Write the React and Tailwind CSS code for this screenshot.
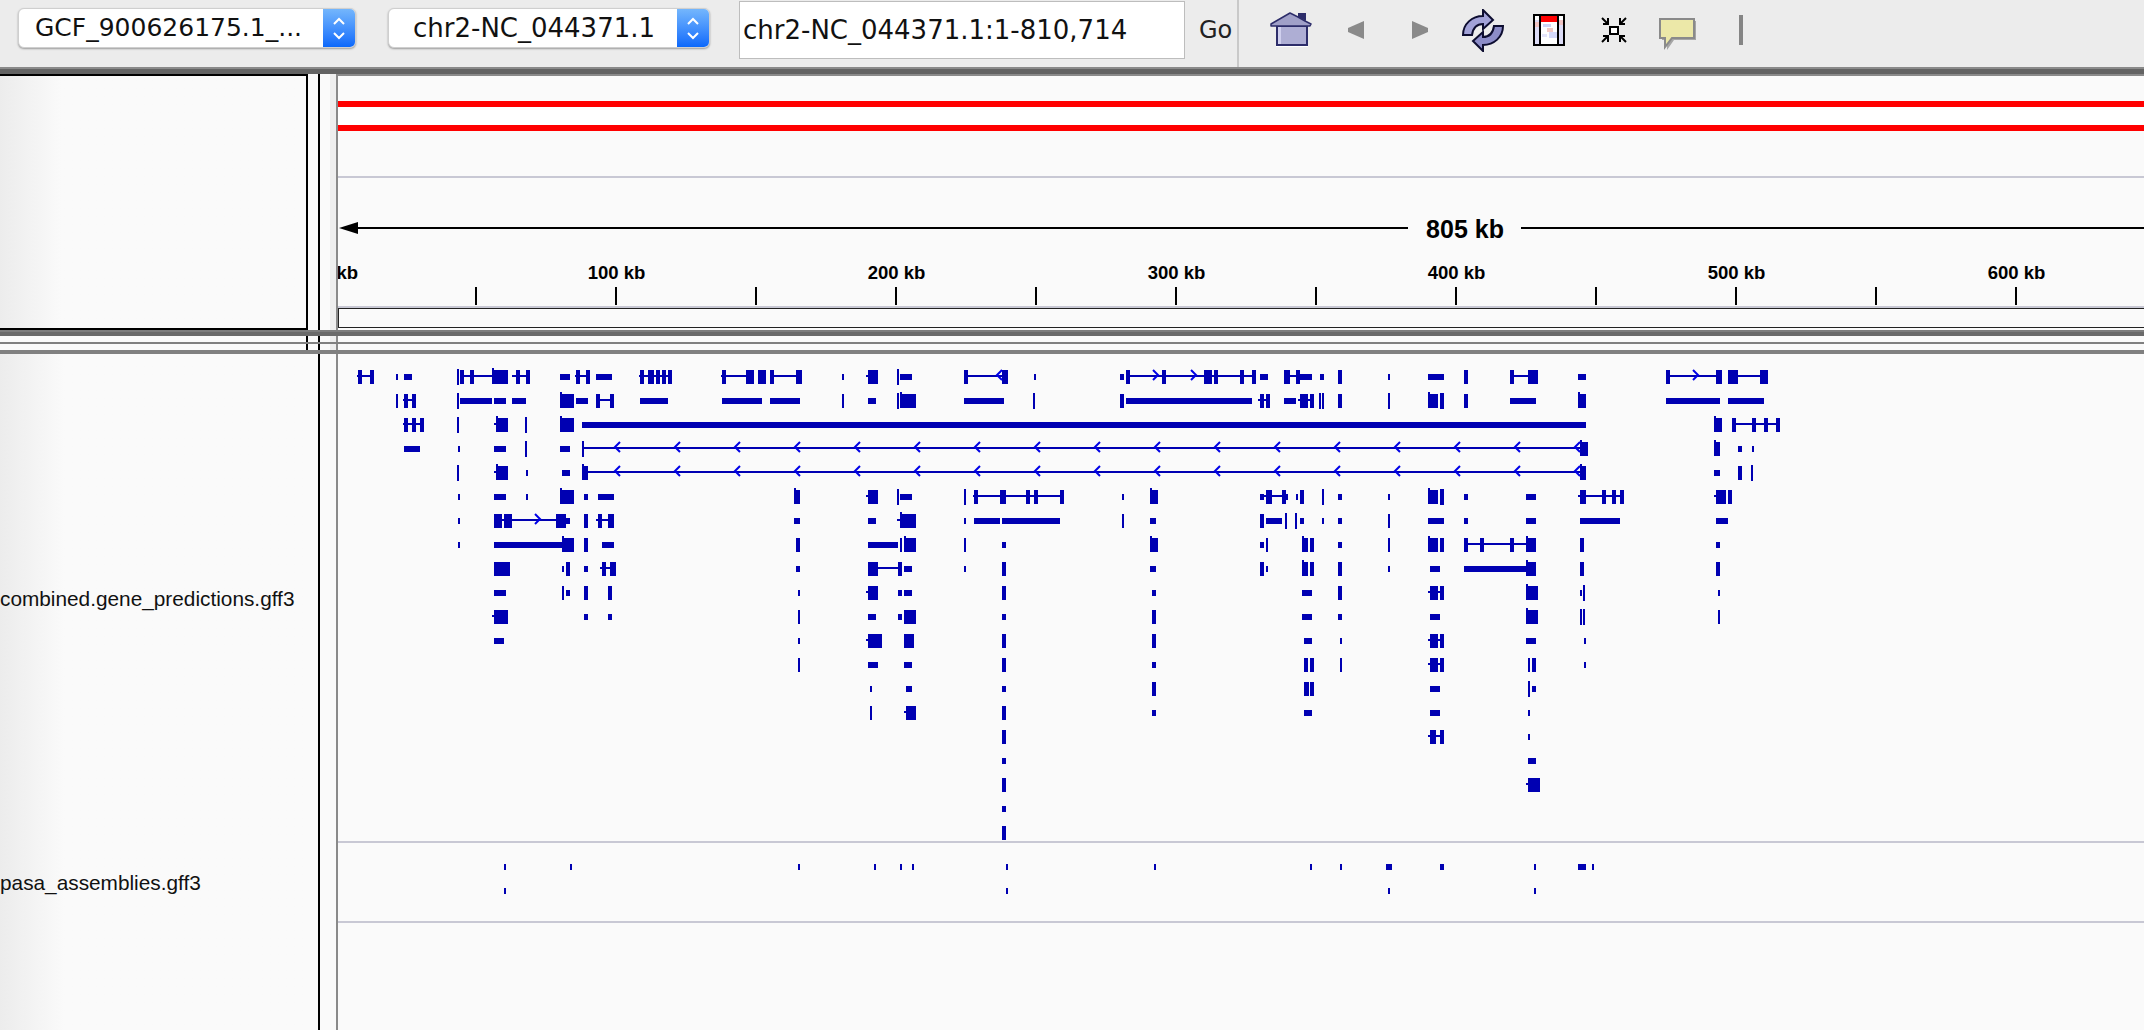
import React from 'react';

const UI_FONT = "font-['DejaVu_Sans',sans-serif]";

// gene rows of the first track: "x1-x2type", t tall exon, s short exon, l intron line, u taller bar, b tall with bump
const ROWS = [
  '358-362t 370-374t 357-374l 396-398s 404-412s 457-459u 460-464t 470-474t 460-492l 492-508b 512-530l 516-520t 526-530t 560-570s 576-580t 586-590t 575-590l 596-612s 639-672l 640-644t 648-654t 656-660t 662-666t 668-672t 721-746l 722-726t 746-754t 758-766t 770-796l 770-774t 796-802t 842-844s 866-868l 868-878t 897-899u 900-912s 964-1002l 964-968t 1002-1008t 1034-1036s 1120-1124s 1126-1254l 1126-1130t 1162-1166t 1204-1212t 1214-1218t 1240-1244t 1252-1256t 1260-1268s 1284-1300l 1284-1290t 1296-1300t 1300-1312s 1320-1324s 1338-1342t 1388-1390s 1428-1444s 1464-1468t 1510-1528l 1510-1514t 1528-1538t 1578-1586s 1666-1716l 1666-1670t 1716-1722t 1728-1760l 1728-1738t 1760-1768t',
  '396-398t 403-416l 404-408t 412-416t 457-459u 460-492s 494-506s 512-526s 560-574b 576-588s 596-614l 596-600t 610-614t 640-668s 722-762s 770-800s 842-844t 868-876s 897-899u 900-916b 964-1004s 1033-1035u 1120-1124t 1126-1252s 1258-1270l 1260-1264t 1266-1270t 1284-1296s 1298-1314l 1300-1308t 1310-1314t 1319-1321u 1322-1324u 1338-1342t 1388-1390u 1428-1438b 1440-1444u 1464-1468t 1510-1536s 1578-1586b 1666-1720s 1728-1764s',
  '403-424l 404-408t 412-416t 420-424t 457-459u 494-508l 496-508b 525-527u 560-574b 582-1586s 1714-1722b 1732-1780l 1732-1736t 1752-1756t 1764-1768t 1776-1780t',
  '404-420s 458-460s 494-506s 525-527u 560-570s 582-1580l 582-584u 1580-1588b 1714-1720b 1738-1742s 1752-1754s',
  '457-459u 494-508l 496-508b 526-528s 562-570s 582-1580l 582-588b 1580-1586b 1714-1720s 1738-1742t 1751-1753u',
  '458-460s 494-506s 526-528s 560-574b 584-588s 598-614s 794-800b 866-868l 868-878t 897-899u 900-912s 964-966u 973-1064l 974-978t 1000-1006t 1026-1030t 1034-1038t 1060-1064t 1122-1124s 1150-1158b 1260-1264s 1264-1288l 1266-1272t 1282-1286t 1286-1288s 1296-1298s 1300-1304t 1322-1324u 1338-1342s 1388-1390s 1428-1438b 1440-1444u 1464-1468s 1526-1536s 1578-1624l 1580-1586t 1602-1606t 1612-1616t 1620-1624t 1714-1726l 1716-1726t 1728-1732t',
  '458-460s 494-556l 494-502t 504-512t 556-566t 566-570s 584-588t 596-614l 598-602t 608-614t 794-800s 868-876s 897-902l 900-916b 964-966s 974-1000s 1002-1060s 1122-1124t 1150-1156s 1260-1264t 1266-1282s 1285-1287u 1295-1297u 1300-1304s 1322-1324s 1338-1342s 1388-1390t 1428-1444s 1464-1468s 1526-1536s 1580-1620s 1716-1728s',
  '458-460s 494-562s 562-574b 584-588t 602-614s 796-800t 868-898s 900-902t 904-916b 964-966t 1002-1006s 1150-1158b 1260-1264s 1266-1268t 1302-1308b 1310-1314t 1338-1342s 1388-1390t 1428-1438b 1440-1444t 1464-1526l 1464-1468t 1480-1484t 1510-1514t 1526-1536b 1580-1584t 1716-1720s',
  '494-510t 562-564s 566-570t 584-588s 600-616l 602-606t 610-616t 796-800s 868-898l 868-878t 898-902t 904-912s 964-966s 1002-1006t 1150-1156s 1260-1264t 1266-1268s 1302-1308b 1310-1314t 1338-1342t 1388-1390s 1430-1440s 1464-1526s 1526-1536b 1580-1584t 1716-1720t',
  '494-506s 562-564t 566-570s 584-588t 608-612t 798-800s 866-868l 868-878t 898-902s 904-912s 1002-1006t 1152-1156s 1302-1312s 1338-1342t 1428-1444l 1430-1438t 1440-1444t 1526-1538b 1580-1582s 1583-1585u 1718-1720s',
  '492-494l 494-508t 584-588s 608-612s 798-800t 868-876s 898-902s 904-916t 1002-1006s 1152-1156t 1302-1312s 1338-1342s 1430-1440s 1526-1538b 1580-1582u 1583-1585u 1718-1720t',
  '494-504s 798-800s 866-868l 868-882t 904-914t 1002-1006t 1152-1156t 1304-1312s 1340-1342s 1428-1444l 1430-1438t 1440-1444t 1526-1536s 1584-1586s',
  '798-800t 868-878s 904-912s 1002-1006t 1152-1156s 1304-1308t 1310-1314t 1340-1342t 1428-1444l 1430-1438t 1440-1444t 1528-1530t 1532-1536t 1584-1586s',
  '870-872s 906-912s 1002-1006s 1152-1156t 1304-1309t 1310-1314t 1430-1440s 1528-1530u 1532-1536s',
  '870-872t 904-906l 906-916t 1002-1006t 1152-1156s 1304-1312s 1430-1440s 1528-1530s',
  '1002-1006t 1428-1444l 1430-1436t 1440-1444t 1528-1530s',
  '1002-1006s 1528-1536s',
  '1002-1006t 1526-1528l 1528-1540t',
  '1002-1006s',
  '1002-1006t',
];

const PASA_ROWS = [
  '504-506s 570-572s 798-800s 874-876s 900-902s 912-914s 1006-1008s 1154-1156s 1310-1312s 1340-1342s 1386-1392s 1440-1444s 1534-1536s 1578-1586s 1592-1594s',
  '504-506s 1006-1008s 1388-1390s 1534-1536s',
];

const LEFT_CHEVRONS = Array.from({ length: 17 }, (_, i) => 615 + i * 60);

const GeneRows = ({ rows, firstY, viewY, height }) => (
  <svg className="block" width="1806" height={height} viewBox={`338 ${viewY} 1806 ${height}`} shapeRendering="crispEdges">
    {rows.map((row, i) => {
      const c = firstY + i * 24;
      return row.split(' ').map((seg) => {
        const [, a, b, type] = seg.match(/(\d+)-(\d+)(\w)/);
        const x = Number(a);
        const w = Number(b) - x;
        if (type === 'l') return <rect key={seg} x={x} y={c - 2} width={w} height={2} fill="#0000b2" />;
        if (type === 's') return <rect key={seg} x={x} y={c - 3} width={w} height={6} fill="#0000b2" />;
        if (type === 'u') return <rect key={seg} x={x} y={c - 8} width={w} height={16} fill="#0000b2" />;
        return (
          <g key={seg} fill="#0000b2">
            <rect x={x} y={c - 7} width={w} height={14} />
            {type === 'b' && <rect x={x} y={c - 9} width={2} height={2} />}
          </g>
        );
      });
    })}
  </svg>
);

const Chevron = ({ x, c, dir }) => (
  <polyline
    points={`${x + 5 * dir},${c - 7} ${x},${c - 2} ${x + 5 * dir},${c + 3}`}
    fill="none"
    stroke="#0000e6"
    strokeWidth="2"
  />
);

const GeneTrack = () => (
  <div className="relative h-[489px] border-b-2 border-[#c8c8d4]">
    <GeneRows rows={ROWS} firstY={377} viewY={354} height={487} />
    <svg className="absolute left-0 top-0" width="1806" height="487" viewBox="338 354 1806 487">
      {LEFT_CHEVRONS.map((x) => (
        <g key={x}>
          <Chevron x={x} c={449} dir={1} />
          <Chevron x={x} c={473} dir={1} />
        </g>
      ))}
      <Chevron x={997} c={377} dir={1} />
      <Chevron x={1158} c={377} dir={-1} />
      <Chevron x={1196} c={377} dir={-1} />
      <Chevron x={1698} c={377} dir={-1} />
      <Chevron x={540} c={521} dir={-1} />
    </svg>
  </div>
);

const Ruler = () => {
  const ticks = Array.from({ length: 13 }, (_, i) => 475.5 + i * 140);
  return (
    <svg className="block font-['Liberation_Sans',sans-serif] font-bold" width="1806" height="128" viewBox="338 178 1806 128">
      <rect x="345" y="227" width="1063" height="2" fill="#000" />
      <rect x="1521" y="227" width="623" height="2" fill="#000" />
      <polygon points="339,228 358,222 358,234" fill="#000" />
      <text x="1465" y="238" textAnchor="middle" fontSize="25" fill="#000">805 kb</text>
      <text x="358" y="279" textAnchor="end" fontSize="18.5" fill="#000">0 kb</text>
      {ticks.map((x, i) => (
        <g key={x}>
          <rect x={Math.floor(x)} y="287" width="2" height="18" fill="#000" />
          {i % 2 === 1 && (
            <text x={x + 1} y="279" textAnchor="middle" fontSize="18.5" fill="#000">
              {((i + 1) / 2) * 100} kb
            </text>
          )}
        </g>
      ))}
    </svg>
  );
};

const Combo = ({ label, width, textClass }) => (
  <div className={`mb-1 flex h-10 ${width} overflow-hidden rounded-md border border-[#cfcfcf] bg-white shadow-[0_1px_2px_rgba(0,0,0,0.35)]`}>
    <div className={`flex-1 overflow-hidden whitespace-nowrap leading-[38px] text-[#111] ${textClass}`}>{label}</div>
    <div className="flex w-8 flex-col items-center justify-center gap-[5px] bg-linear-to-b from-[#74b6fc] to-[#0a68fb]">
      <svg width="14" height="9" viewBox="0 0 14 9"><polyline points="2,7 7,2 12,7" fill="none" stroke="#fff" strokeWidth="2" /></svg>
      <svg width="14" height="9" viewBox="0 0 14 9"><polyline points="2,2 7,7 12,2" fill="none" stroke="#fff" strokeWidth="2" /></svg>
    </div>
  </div>
);

const HomeIcon = () => (
  <svg className="ml-[31px]" width="42" height="36" viewBox="0 0 42 36">
    <rect x="6" y="15" width="32" height="20" fill="#fff" />
    <rect x="7" y="14" width="30" height="19" fill="#aeaed4" stroke="#2d2d6a" strokeWidth="2" />
    <rect x="8" y="15" width="3" height="17" fill="#d0d0ee" />
    <polygon points="1,12 20,1 28,5 35,9 41,12 40,14 1,14" fill="#a0a0c8" stroke="#2d2d6a" strokeWidth="1.5" strokeLinejoin="round" />
    <polygon points="28,1 36,1 36,9 28,5" fill="#2d2d6a" />
  </svg>
);

const TriangleLeft = () => (
  <svg className="ml-9" width="16" height="18" viewBox="0 0 16 18"><polygon points="0,7 16,0 16,18 0,11" fill="#8a8a8a" /></svg>
);

const TriangleRight = () => (
  <svg className="ml-12" width="16" height="18" viewBox="0 0 16 18"><polygon points="0,0 16,7 16,11 0,18" fill="#8a8a8a" /></svg>
);

const ReloadIcon = () => (
  <svg className="ml-[34px]" width="43" height="43" viewBox="0 0 43 43">
    <path d="M21 1 L31 11 L21 20 V15 C15 15 11 19 10 26 L1 26 C1 15 10 7 21 7 Z" fill="#a2a2d8" stroke="#0d0d30" strokeWidth="2" />
    <path d="M21 1 L31 11 L21 20 V15 C15 15 11 19 10 26 L1 26 C1 15 10 7 21 7 Z" fill="#8c8cc8" stroke="#0d0d30" strokeWidth="2" transform="rotate(180 21 21.5)" />
  </svg>
);

const RoiIcon = () => (
  <svg className="ml-7" width="32" height="32" viewBox="0 0 32 32" shapeRendering="crispEdges">
    <rect x="1" y="1" width="30" height="30" fill="#fff" stroke="#000" strokeWidth="2" />
    <rect x="2" y="6" width="4" height="24" fill="#dcdcf6" />
    <rect x="26" y="6" width="4" height="24" fill="#dcdcf6" />
    <rect x="2" y="8" width="4" height="5" fill="#f0c4c4" />
    <rect x="26" y="6" width="4" height="5" fill="#f0c4c4" />
    <rect x="8" y="2" width="16" height="6" fill="#ff0000" />
    <rect x="10" y="10" width="8" height="3" fill="#cfd4f6" />
    <rect x="14" y="14" width="6" height="4" fill="#f2c8c4" />
    <rect x="16" y="18" width="8" height="6" fill="#d4d8fa" />
    <rect x="9" y="20" width="5" height="3" fill="#e4e4fa" />
    <rect x="6" y="2" width="2" height="28" fill="#000" />
    <rect x="24" y="2" width="2" height="28" fill="#000" />
  </svg>
);

const CollapseArrow = ({ transform }) => (
  <g transform={transform} fill="none" stroke="#000" strokeWidth="2">
    <path d="M1 1 L7 7" />
    <path d="M7 1 V7 H2" />
  </g>
);

const CollapseIcon = () => (
  <svg className="ml-9" width="26" height="26" viewBox="0 0 26 26">
    <rect x="9" y="10" width="8" height="7" fill="#fff" stroke="#000" strokeWidth="2" />
    <CollapseArrow />
    <CollapseArrow transform="matrix(-1 0 0 1 26 0)" />
    <CollapseArrow transform="matrix(1 0 0 -1 0 26)" />
    <CollapseArrow transform="matrix(-1 0 0 -1 26 26)" />
  </svg>
);

const NoteIcon = () => (
  <svg className="ml-8 mt-2" width="38" height="32" viewBox="0 0 38 32">
    <path d="M3 3 H37 V22 H15 L8 32 V22 H3 Z" fill="#a6a6a6" />
    <path d="M1 1 H35 V20 H13 L6 29 V20 H1 Z" fill="#ece8a8" stroke="#8a8a8a" strokeWidth="2" />
  </svg>
);

const Toolbar = () => (
  <div className={`flex h-[67px] bg-[#ececec] ${UI_FONT}`}>
    <div className="flex w-[1239px] items-center border-r-2 border-[#c9c9c9] pb-[7px] pl-[18px]">
      <Combo label="GCF_900626175.1_..." width="w-[338px]" textClass="pl-4 text-[25px]" />
      <div className="ml-8"><Combo label="chr2-NC_044371.1" width="w-[322px]" textClass="pl-6 text-[26px]" /></div>
      <div className="ml-[29px] flex h-[58px] w-[446px] items-center border border-[#bdbdbd] bg-white pl-[3px] text-[26px] text-[#111]">
        chr2-NC_044371.1:1-810,714
      </div>
      <div className="ml-[14px] text-[24px] text-[#222]">Go</div>
    </div>
    <div className="flex items-center pb-[7px]">
      <HomeIcon />
      <TriangleLeft />
      <TriangleRight />
      <ReloadIcon />
      <RoiIcon />
      <CollapseIcon />
      <NoteIcon />
      <div className="ml-[42px] h-[30px] w-1 bg-[#858585]" />
    </div>
  </div>
);

const Band = () => <div className="h-[7px] border-t-2 border-[#8a8a8a] bg-[#636363]" />;

// the thin black and gray rules that run between the name column and the data panel
const Gutter = ({ strip }) => (
  <>
    <div className="w-[2px] bg-black" />
    <div className="w-[10px]" />
    <div className={`w-[6px] ${strip ? 'bg-[#eeeeee]' : ''}`} />
    <div className="w-[2px] bg-[#8a8a8a]" />
  </>
);

const Spacer = ({ height }) => (
  <div className={`flex ${height}`}>
    <div className="w-[308px] border-r-2 border-black" />
    <div className="w-[10px]" />
    <Gutter strip />
  </div>
);

export default function App() {
  return (
    <div className="flex h-[1030px] w-[2144px] flex-col overflow-hidden bg-[#fafafa]">
      <Toolbar />
      <Band />

      <div className="flex h-[256px]">
        <div className="w-[308px] border-y-2 border-r-2 border-black bg-linear-to-r from-[#ececec] to-[#fafafa] to-20%" />
        <div className="w-[10px]" />
        <Gutter strip />
        <div className="flex-1 border-t-2 border-[#8a8a8a]">
          <div className="mt-[25px] h-[30px] border-y-[6px] border-[#ff0000] bg-white" />
          <div className="mt-[45px] border-t-2 border-[#c8c8d4]">
            <Ruler />
            <div className="h-[22px] border-t-2 border-[#c8c8d4]">
              <div className="h-5 border border-r-0 border-[#222]" />
            </div>
          </div>
        </div>
      </div>

      <div className="h-[6px] border-t-2 border-[#7d7d7d] bg-[#6a6a6a]" />
      <Spacer height="h-[6px]" />
      <div className="h-[2px] bg-[#808080]" />
      <Spacer height="h-[6px]" />
      <div className="h-1 bg-[#808080]" />

      <div className="flex flex-1">
        <div className="flex w-[318px] flex-col bg-linear-to-r from-[#ececec] to-[#fafafa] to-20% font-['Liberation_Sans',sans-serif] text-[20.8px] text-[#111]">
          <div className="flex h-[489px] items-center">combined.gene_predictions.gff3</div>
          <div className="flex h-[80px] items-center">pasa_assemblies.gff3</div>
        </div>
        <Gutter />
        <div className="flex-1">
          <GeneTrack />
          <div className="h-[80px] border-b-2 border-[#c8c8d4]">
            <GeneRows rows={PASA_ROWS} firstY={867} viewY={843} height={78} />
          </div>
        </div>
      </div>
    </div>
  );
}
